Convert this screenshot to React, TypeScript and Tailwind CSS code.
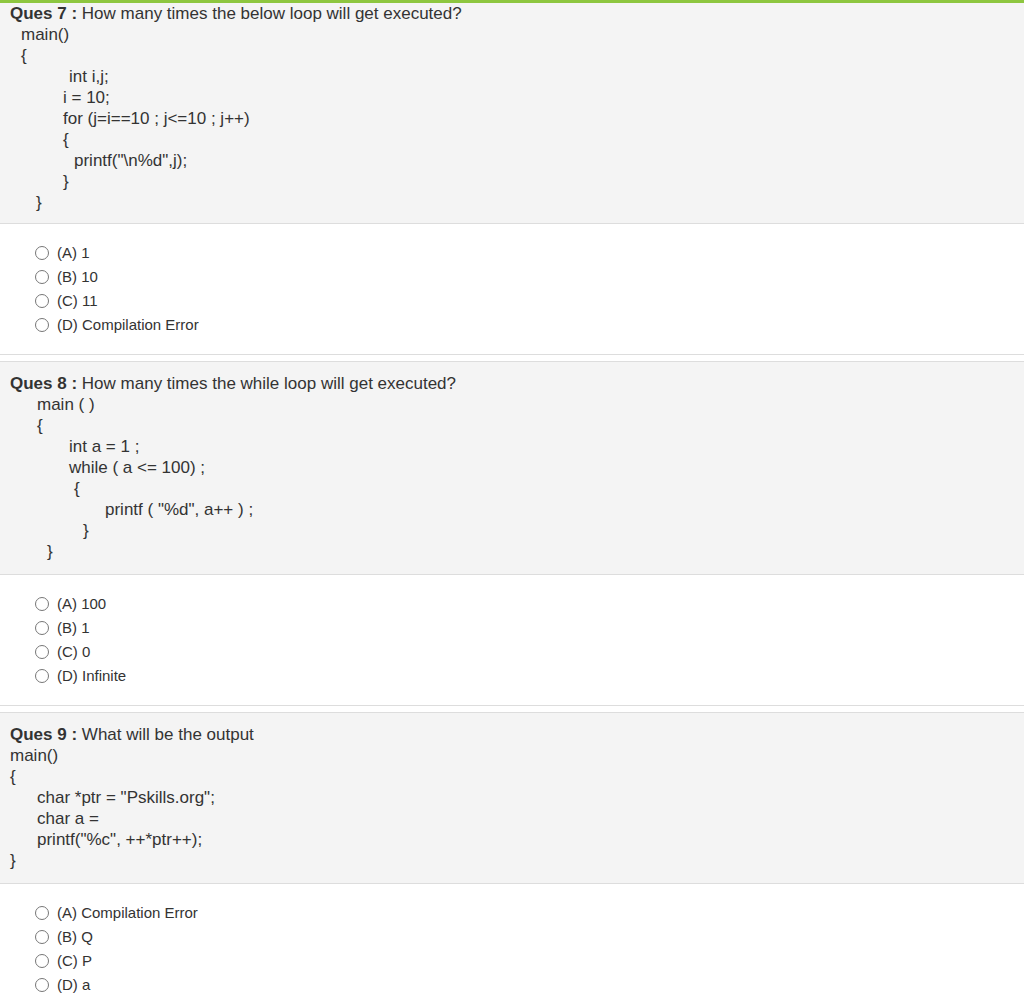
type Line = [number, string];

const questions: { no: number; title: string; code: Line[]; opts: string[]; headH: string; pt: string; optH: string }[] = [
  {
    no: 7,
    title: "How many times the below loop will get executed?",
    code: [
      [21, "main()"],
      [21, "{"],
      [69, "int i,j;"],
      [63, "i = 10;"],
      [63, "for (j=i==10 ; j<=10 ; j++)"],
      [63, "{"],
      [74, 'printf("\\n%d",j);'],
      [63, "}"],
      [36, "}"],
    ],
    opts: ["(A) 1", "(B) 10", "(C) 11", "(D) Compilation Error"],
    headH: "h-[221px]",
    pt: "pt-[0px]",
    optH: "h-[131px]",
  },
  {
    no: 8,
    title: "How many times the while loop will get executed?",
    code: [
      [37, "main ( )"],
      [37, "{"],
      [69, "int a = 1 ;"],
      [69, "while ( a <= 100) ;"],
      [74, "{"],
      [105, 'printf ( "%d", a++ ) ;'],
      [83, "}"],
      [47, "}"],
    ],
    opts: ["(A) 100", "(B) 1", "(C) 0", "(D) Infinite"],
    headH: "h-[213px]",
    pt: "pt-[11px]",
    optH: "h-[131px]",
  },
  {
    no: 9,
    title: "What will be the output",
    code: [
      [10, "main()"],
      [10, "{"],
      [37, 'char *ptr = "Pskills.org";'],
      [37, "char a ="],
      [37, 'printf("%c", ++*ptr++);'],
      [10, "}"],
    ],
    opts: ["(A) Compilation Error", "(B) Q", "(C) P", "(D) a"],
    headH: "h-[171px]",
    pt: "pt-[11px]",
    optH: "h-[130px]",
  },
];

export default function App() {
  return (
    <div className="w-[1024px] h-[1003px] overflow-hidden bg-white text-[#333] font-[Liberation_Sans,Arial,sans-serif]">
      <div className="h-[3px] bg-[#8dc63f]" />
      {questions.map((q, i) => (
        <div key={q.no} className={i > 0 ? "border-t border-[#ddd] mt-[6px]" : ""}>
          <div className={`${q.headH} ${q.pt} bg-[#f4f4f4] border-b border-[#ddd]`}>
            <div className="pl-[10px] text-[17px] leading-[21px]">
              <b>Ques {q.no} :</b> {q.title}
            </div>
            {q.code.map(([x, t], k) => (
              <div key={k} className="text-[17px] leading-[21px] whitespace-pre" style={{ paddingLeft: x }}>
                {t}
              </div>
            ))}
          </div>
          <div className={`${q.optH} pt-[17px] border-b border-[#ddd]`}>
            {q.opts.map((o) => (
              <div key={o} className="flex items-center h-[24px] pl-[35px] text-[15px]">
                <span className="w-[14px] h-[14px] rounded-full border border-[#777] bg-white mr-[8px]" />
                {o}
              </div>
            ))}
          </div>
        </div>
      ))}
    </div>
  );
}
